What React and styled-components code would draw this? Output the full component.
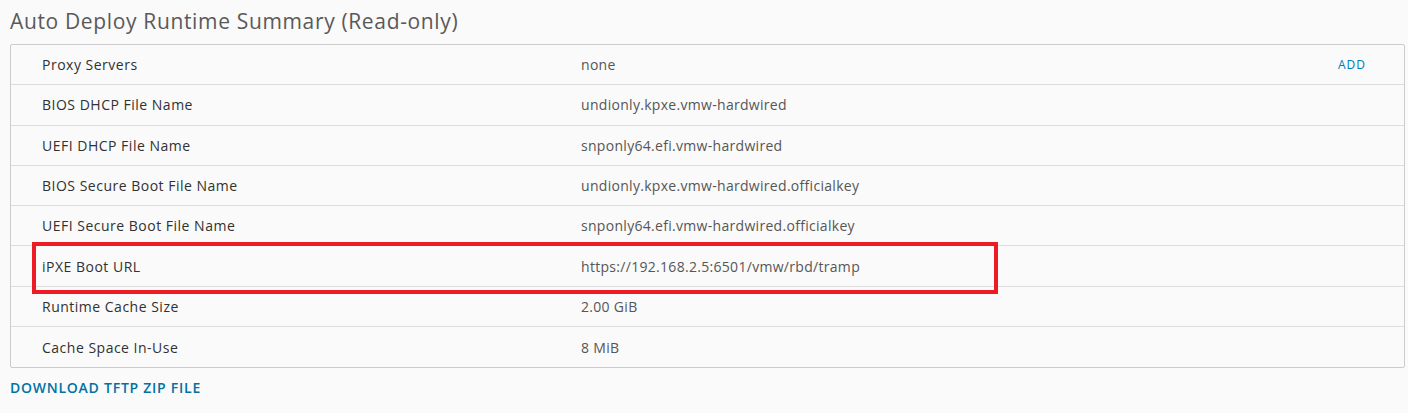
import styled, { createGlobalStyle } from "styled-components";

const GlobalStyle = createGlobalStyle`
  html, body {
    margin: 0;
    padding: 0;
    background: #fafafa;
  }
  body {
    font-family: "Open Sans", "Liberation Sans", sans-serif;
  }
`;

const rows = [
  { label: "Proxy Servers", value: "none", action: "ADD" },
  { label: "BIOS DHCP File Name", value: "undionly.kpxe.vmw-hardwired" },
  { label: "UEFI DHCP File Name", value: "snponly64.efi.vmw-hardwired" },
  { label: "BIOS Secure Boot File Name", value: "undionly.kpxe.vmw-hardwired.officialkey" },
  { label: "UEFI Secure Boot File Name", value: "snponly64.efi.vmw-hardwired.officialkey" },
  { label: "iPXE Boot URL", value: "https://192.168.2.5:6501/vmw/rbd/tramp", highlight: true },
  { label: "Runtime Cache Size", value: "2.00 GiB" },
  { label: "Cache Space In-Use", value: "8 MiB" },
];

const App = () => {
  return (
    <Page>
      <GlobalStyle />
      <Title>Auto Deploy Runtime Summary (Read-only)</Title>
      <Table>
        {rows.map((r) => (
          <Row key={r.label}>
            <Label>{r.label}</Label>
            <Value>{r.value}</Value>
            {r.action && <Action>{r.action}</Action>}
            {r.highlight && <Highlight />}
          </Row>
        ))}
      </Table>
      <Download>DOWNLOAD TFTP ZIP FILE</Download>
    </Page>
  );
};

const Page = styled.div`
  padding: 6px 3px 0 10px;
  width: 1395px;
`;

const Title = styled.h2`
  margin: 0 0 8px;
  font-size: 21px;
  font-weight: 400;
  color: #595959;
  line-height: 30px;
  letter-spacing: 0.65px;
`;

const Table = styled.div`
  border: 1px solid #cccccc;
  border-radius: 2px;
  background: #fafafa;
`;

const Row = styled.div`
  position: relative;
  display: flex;
  align-items: center;
  height: 40.3px;
  box-sizing: border-box;
  padding: 0 38px 0 31px;
  border-bottom: 1px solid #dddddd;
  font-size: 14px;

  &:last-child {
    border-bottom: none;
  }
`;

const Label = styled.div`
  width: 539px;
  color: #313131;
  letter-spacing: 0.5px;
`;

const Value = styled.div`
  flex: 1;
  color: #565656;
  letter-spacing: 0.3px;
`;

const Action = styled.a`
  color: #0079b8;
  font-size: 12px;
  letter-spacing: 1px;
  cursor: pointer;
`;

const Highlight = styled.div`
  position: absolute;
  left: 21px;
  top: -4px;
  width: 966px;
  height: 52px;
  box-sizing: border-box;
  border: 4px solid #ed1c24;
  pointer-events: none;
`;

const Download = styled.a`
  display: block;
  margin-top: 10px;
  color: #0072a3;
  font-size: 14px;
  font-weight: 600;
  letter-spacing: 0.75px;
  cursor: pointer;
`;

export default App;
